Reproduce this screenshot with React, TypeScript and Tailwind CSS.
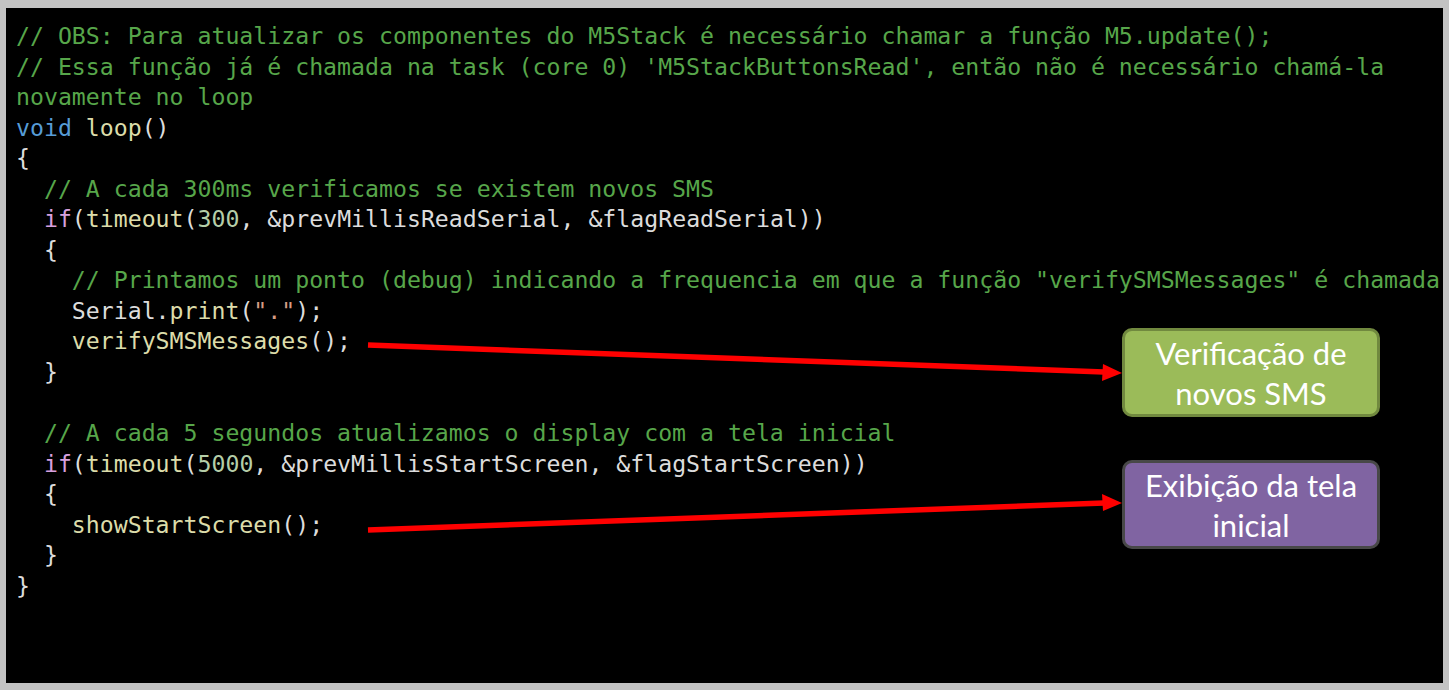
import React from "react";

type Tok = [string, string];

const C = {
  cm: "text-[#57a64a]",
  kw: "text-[#569cd6]",
  ctl: "text-[#d8a0df]",
  fn: "text-[#dcdcaa]",
  tx: "text-[#dcdcdc]",
  num: "text-[#b5cea8]",
  str: "text-[#d69d85]",
};

const lines: Tok[][] = [
  [[C.cm, "// OBS: Para atualizar os componentes do M5Stack é necessário chamar a função M5.update();"]],
  [[C.cm, "// Essa função já é chamada na task (core 0) 'M5StackButtonsRead', então não é necessário chamá-la"]],
  [[C.cm, "novamente no loop"]],
  [[C.kw, "void"], [C.tx, " "], [C.fn, "loop"], [C.tx, "()"]],
  [[C.tx, "{"]],
  [[C.cm, "  // A cada 300ms verificamos se existem novos SMS"]],
  [[C.ctl, "  if"], [C.tx, "("], [C.fn, "timeout"], [C.tx, "("], [C.num, "300"], [C.tx, ", &prevMillisReadSerial, &flagReadSerial))"]],
  [[C.tx, "  {"]],
  [[C.cm, "    // Printamos um ponto (debug) indicando a frequencia em que a função \"verifySMSMessages\" é chamada"]],
  [[C.tx, "    Serial."], [C.fn, "print"], [C.tx, "("], [C.str, "\".\""], [C.tx, ");"]],
  [[C.fn, "    verifySMSMessages"], [C.tx, "();"]],
  [[C.tx, "  }"]],
  [[C.tx, " "]],
  [[C.cm, "  // A cada 5 segundos atualizamos o display com a tela inicial"]],
  [[C.ctl, "  if"], [C.tx, "("], [C.fn, "timeout"], [C.tx, "("], [C.num, "5000"], [C.tx, ", &prevMillisStartScreen, &flagStartScreen))"]],
  [[C.tx, "  {"]],
  [[C.fn, "    showStartScreen"], [C.tx, "();"]],
  [[C.tx, "  }"]],
  [[C.tx, "}"]],
];

const Callout = ({ top, bg, border, children }: { top: string; bg: string; border: string; children: React.ReactNode }) => (
  <div
    className={`absolute left-[1116px] ${top} w-[258px] h-[89px] rounded-[10px] border-[3px] ${bg} ${border} flex items-center justify-center text-center text-white text-[31px] leading-[40px] font-['Lato','Open_Sans',sans-serif]`}
  >
    {children}
  </div>
);

export default function App() {
  return (
    <div className="w-[1449px] h-[690px] bg-[#c3c3c3] pt-[8px] pl-[6px] pr-[6px] pb-[7px]">
      <div className="relative w-full h-full bg-black overflow-hidden pt-[13px] pl-[10px]">
        <pre className="font-['DejaVu_Sans_Mono','Liberation_Mono',monospace] text-[23.2px] leading-[30.55px] whitespace-pre">
          {lines.map((l, i) => (
            <div key={i}>
              {l.map(([c, t], j) => (
                <span key={j} className={c}>
                  {t}
                </span>
              ))}
            </div>
          ))}
        </pre>

        <svg className="absolute left-0 top-0" width="1437" height="675" viewBox="6 8 1437 675">
          <line x1="368" y1="345" x2="1104" y2="372" stroke="#ff0000" strokeWidth="5.5" />
          <polygon points="1122,373 1103,364 1102,381" fill="#ff0000" />
          <line x1="368" y1="530" x2="1104" y2="503" stroke="#ff0000" strokeWidth="5.5" />
          <polygon points="1122,503 1102,494 1103,511" fill="#ff0000" />
        </svg>

        <Callout top="top-[320px]" bg="bg-[#9bbb59]" border="border-[#71893f]">
          <span>
            Verificação de
            <br />
            novos SMS
          </span>
        </Callout>
        <Callout top="top-[452px]" bg="bg-[#8064a2]" border="border-[#484848]">
          <span>
            Exibição da tela
            <br />
            inicial
          </span>
        </Callout>
      </div>
    </div>
  );
}
